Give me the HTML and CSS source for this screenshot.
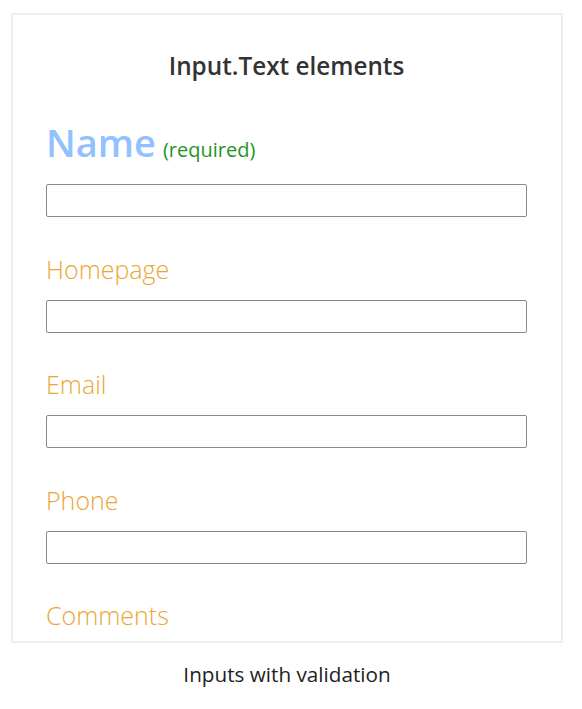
FILE: index.html
```html
<!DOCTYPE html>
<html>
<head>
<meta charset="utf-8">
<link rel="stylesheet" href="styles.css">
</head>
<body>
<div class="page">
  <div class="card">
    <h1 class="title">Input.Text elements</h1>
    <div class="field field-first">
      <div class="label-row"><span class="name-label">Name</span><span class="required">(required)</span></div>
      <div class="input"></div>
    </div>
    <div class="field">
      <div class="label">Homepage</div>
      <div class="input"></div>
    </div>
    <div class="field">
      <div class="label">Email</div>
      <div class="input"></div>
    </div>
    <div class="field">
      <div class="label">Phone</div>
      <div class="input"></div>
    </div>
    <div class="field">
      <div class="label">Comments</div>
      <div class="input textarea"></div>
    </div>
  </div>
  <div class="caption">Inputs with validation</div>
</div>
</body>
</html>
```

FILE: styles.css
```css
html, body {
  margin: 0;
  padding: 0;
  background: #ffffff;
}
body {
  font-family: "Open Sans", "Noto Sans", sans-serif;
}
.page {
  padding: 13px 19px 0 11px;
  display: flex;
  flex-direction: column;
}
.card {
  height: 626px;
  border: 2px solid #eeeeee;
  overflow: hidden;
  padding: 0 34px 0 33px;
  display: flex;
  flex-direction: column;
}
.title {
  margin: 37px 0 0 0;
  font-size: 24.3px;
  line-height: 28px;
  font-weight: 600;
  color: #333333;
  text-align: center;
}
.field {
  display: flex;
  flex-direction: column;
  margin-top: 35.5px;
}
.field-first {
  margin-top: 40px;
}
.label-row {
  display: flex;
  align-items: baseline;
  gap: 7px;
  height: 44px;
}
.field-first .input {
  margin-top: 20px;
}
.name-label {
  font-size: 38px;
  font-weight: 600;
  line-height: 44px;
  color: #91c2ff;
}
.required {
  font-size: 20px;
  color: #1f951f;
}
.label {
  font-size: 25px;
  font-weight: 300;
  line-height: 32px;
  color: #eba633;
}
.input {
  margin-top: 15px;
  height: 31px;
  border: 1px solid #8a8a8a;
  border-radius: 2px;
}
.textarea {
  height: 80px;
}
.caption {
  margin-top: 18px;
  text-align: center;
  font-size: 20.7px;
  line-height: 26px;
  color: #222222;
}
```
